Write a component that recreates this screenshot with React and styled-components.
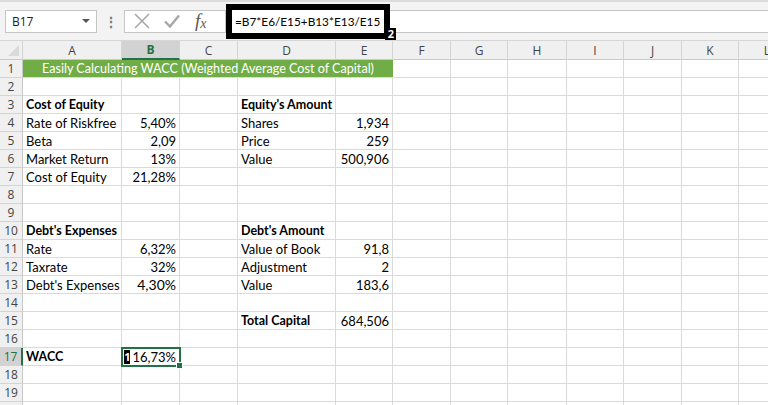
import styled, { createGlobalStyle } from "styled-components";

const GlobalStyle = createGlobalStyle`
  html, body {
    margin: 0;
    padding: 0;
    background: #ffffff;
  }
  body {
    font-family: Lato, "Open Sans", sans-serif;
  }
`;

const colWidths = [23, 99, 58, 58, 98, 57, 58, 57, 59, 57, 58, 57, 57];
const colNames = ["A", "B", "C", "D", "E", "F", "G", "H", "I", "J", "K", "L"];

const sheet = {
  3: { A: { v: "Cost of Equity", b: true }, D: { v: "Equity's Amount", b: true } },
  4: { A: { v: "Rate of Riskfree" }, B: { v: "5,40%", r: true }, D: { v: "Shares" }, E: { v: "1,934", r: true } },
  5: { A: { v: "Beta" }, B: { v: "2,09", r: true }, D: { v: "Price" }, E: { v: "259", r: true } },
  6: { A: { v: "Market Return" }, B: { v: "13%", r: true }, D: { v: "Value" }, E: { v: "500,906", r: true } },
  7: { A: { v: "Cost of Equity" }, B: { v: "21,28%", r: true } },
  10: { A: { v: "Debt's Expenses", b: true }, D: { v: "Debt's Amount", b: true } },
  11: { A: { v: "Rate" }, B: { v: "6,32%", r: true }, D: { v: "Value of Book" }, E: { v: "91,8", r: true } },
  12: { A: { v: "Taxrate" }, B: { v: "32%", r: true }, D: { v: "Adjustment" }, E: { v: "2", r: true } },
  13: { A: { v: "Debt's Expenses" }, B: { v: "4,30%", r: true, big: true }, D: { v: "Value" }, E: { v: "183,6", r: true } },
  15: { D: { v: "Total Capital", b: true }, E: { v: "684,506", r: true } },
  17: { A: { v: "WACC", b: true } },
};

export default function App() {
  const rows = Array.from({ length: 20 }, (_, i) => i + 1);

  return (
    <Window>
      <GlobalStyle />
      <Toolbar>
        <NameBox>
          <span>B17</span>
          <Caret />
        </NameBox>
        <Dots>⋮</Dots>
        <FxButtons>
          <svg width="18" height="18" viewBox="0 0 18 18">
            <path d="M2 2 L16 16 M16 2 L2 16" stroke="#a6a6a6" strokeWidth="1.5" fill="none" />
          </svg>
          <svg width="18" height="16" viewBox="0 0 18 16">
            <path d="M2 8.5 L7 13.5 L16 2.5" stroke="#a6a6a6" strokeWidth="2.4" fill="none" />
          </svg>
          <FxLabel>
            f<sub>x</sub>
          </FxLabel>
        </FxButtons>
        <FormulaBar>
          <Formula>
            =B7*E6/E15+B13*E13/E15
            <Badge $corner>2</Badge>
          </Formula>
        </FormulaBar>
      </Toolbar>

      <Grid $cols={colWidths}>
        <Corner>
          <CornerMark />
        </Corner>
        {colNames.map((c) => (
          <ColHeader key={c} $active={c === "B"}>
            {c}
          </ColHeader>
        ))}

        {rows.map((r) => (
          <Row key={r} r={r} />
        ))}
      </Grid>
    </Window>
  );
}

function Row({ r }) {
  const data = sheet[r] || {};
  const cells = [];

  cells.push(
    <RowHeader key="h" $active={r === 17}>
      {r}
    </RowHeader>
  );

  if (r === 1) {
    cells.push(
      <TitleCell key="title">Easily Calculating WACC (Weighted Average Cost of Capital)</TitleCell>
    );
    colNames.slice(5).forEach((c) => cells.push(<Cell key={c} />));
    return cells;
  }

  colNames.forEach((c) => {
    if (r === 17 && c === "B") {
      cells.push(
        <Cell key={c} $right $selected>
          <Badge>1</Badge>
          16,73%
          <Handle />
        </Cell>
      );
      return;
    }
    const d = data[c];
    cells.push(
      <Cell key={c} $right={d && d.r} $bold={d && d.b} $big={d && d.big}>
        {d ? d.v : ""}
      </Cell>
    );
  });

  return cells;
}

const Window = styled.div`
  width: 768px;
  height: 405px;
  overflow: hidden;
  background: #ffffff;
  position: relative;
`;

const Toolbar = styled.div`
  height: 41px;
  box-sizing: border-box;
  display: flex;
  align-items: center;
  padding-left: 5px;
  background: #f3f3f3;
  border-top: 2px solid #dcdcdc;
  border-bottom: 1px solid #d6d6d6;
`;

const NameBox = styled.div`
  width: 92px;
  height: 23px;
  box-sizing: border-box;
  display: flex;
  align-items: center;
  justify-content: space-between;
  padding: 0 6px;
  background: #ffffff;
  border: 1px solid #c6c6c6;
  font-family: "Open Sans", sans-serif;
  font-size: 12px;
  color: #222;
`;

const Caret = styled.span`
  width: 0;
  height: 0;
  border-left: 4px solid transparent;
  border-right: 4px solid transparent;
  border-top: 4px solid #555;
`;

const Dots = styled.span`
  width: 27px;
  text-align: center;
  color: #777;
  font-size: 14px;
  font-weight: bold;
`;

const FxButtons = styled.div`
  width: 101px;
  height: 23px;
  box-sizing: border-box;
  display: flex;
  align-items: center;
  gap: 12px;
  padding-left: 8px;
  background: #ffffff;
  border: 1px solid #c6c6c6;
  border-right: none;
`;

const FxLabel = styled.span`
  font-family: "Liberation Serif", serif;
  font-style: italic;
  font-size: 19px;
  color: #5a5a5a;
  margin-left: 2px;

  sub {
    font-size: 14px;
    vertical-align: -1px;
  }
`;

const FormulaBar = styled.div`
  flex: 1;
  height: 23px;
  box-sizing: border-box;
  display: flex;
  align-items: center;
  padding-left: 6px;
  background: #ffffff;
  border: 1px solid #c6c6c6;
  border-right: none;
`;

const Formula = styled.span`
  position: relative;
  height: 23px;
  display: flex;
  align-items: center;
  padding: 0 4px 0 3px;
  background: #ffffff;
  outline: 6px solid #000000;
  font-family: Lato, sans-serif;
  font-size: 11.8px;
  color: #000;
`;

const Badge = styled.span`
  display: inline-flex;
  align-items: center;
  justify-content: center;
  width: 9px;
  height: 14px;
  margin-right: 2px;
  background: #000000;
  color: #ffffff;
  font-family: "Open Sans", sans-serif;
  font-weight: bold;
  font-size: 11px;

  ${(p) =>
    p.$corner &&
    `
    position: absolute;
    right: -12px;
    bottom: -7px;
    width: 11px;
    height: 12px;
    margin: 0;
  `}
`;

const Grid = styled.div`
  display: grid;
  grid-template-columns: ${(p) => p.$cols.map((w) => `${w}px`).join(" ")};
  grid-template-rows: 19px;
  grid-auto-rows: 18px;
`;

const Corner = styled.div`
  background: #f0f0f0;
  border-right: 1px solid #d4d4d4;
  border-bottom: 1px solid #c8c8c8;
  position: relative;
`;

const CornerMark = styled.span`
  position: absolute;
  right: 3px;
  bottom: 3px;
  width: 0;
  height: 0;
  border-left: 11px solid transparent;
  border-bottom: 11px solid #dadada;
`;

const ColHeader = styled.div`
  box-sizing: border-box;
  display: flex;
  align-items: center;
  justify-content: center;
  background: ${(p) => (p.$active ? "#d2d2d2" : "#f0f0f0")};
  border-right: 1px solid #d4d4d4;
  border-bottom: ${(p) => (p.$active ? "2px solid #217346" : "1px solid #c8c8c8")};
  color: ${(p) => (p.$active ? "#217346" : "#444444")};
  font-weight: ${(p) => (p.$active ? "bold" : "normal")};
  font-family: "Open Sans", sans-serif;
  font-size: 12px;
`;

const RowHeader = styled.div`
  box-sizing: border-box;
  display: flex;
  align-items: center;
  justify-content: center;
  background: ${(p) => (p.$active ? "#d2d2d2" : "#f0f0f0")};
  border-bottom: 1px solid #d4d4d4;
  border-right: ${(p) => (p.$active ? "2px solid #217346" : "1px solid #c8c8c8")};
  color: ${(p) => (p.$active ? "#217346" : "#444444")};
  font-family: "Open Sans", sans-serif;
  font-size: 12px;
`;

const Cell = styled.div`
  position: relative;
  box-sizing: border-box;
  display: flex;
  align-items: center;
  justify-content: ${(p) => (p.$right ? "flex-end" : "flex-start")};
  padding: 0 3px;
  border-right: 1px solid #dadada;
  border-bottom: 1px solid #dadada;
  font-size: ${(p) => (p.$big ? "14px" : p.$bold ? "12.5px" : "13px")};
  font-weight: ${(p) => (p.$bold ? "bold" : "normal")};
  color: #000000;
  white-space: nowrap;

  ${(p) =>
    p.$selected &&
    `
    outline: 2px solid #217346;
    outline-offset: -1px;
    z-index: 1;
  `}
`;

const Handle = styled.span`
  position: absolute;
  right: -4px;
  bottom: -4px;
  width: 5px;
  height: 5px;
  background: #217346;
  border: 1px solid #ffffff;
`;

const TitleCell = styled.div`
  grid-column: span 5;
  box-sizing: border-box;
  display: flex;
  align-items: center;
  justify-content: center;
  background: #70ad47;
  border-bottom: 1px solid #dadada;
  color: #ffffff;
  font-size: 12.6px;
  white-space: nowrap;
`;
